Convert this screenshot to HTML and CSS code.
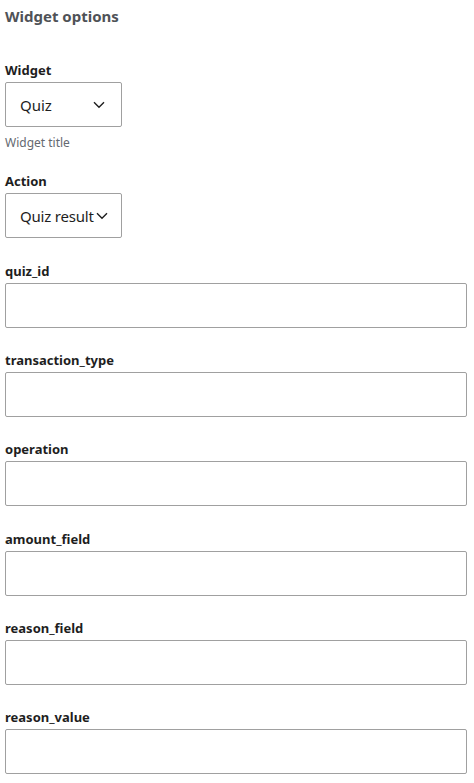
FILE: index.html
```html
<!DOCTYPE html>
<html>
<head>
<meta charset="utf-8">
<link rel="stylesheet" href="styles.css">
</head>
<body>
<div class="panel">
  <h2 class="title">Widget options</h2>
  <div class="field field-first">
    <label class="label">Widget</label>
    <div class="select"><span>Quiz</span><svg class="chev" viewBox="0 0 12 8" width="12" height="8"><path d="M1 1.2 L6 6.2 L11 1.2" fill="none" stroke="#1e1e1e" stroke-width="1.4"/></svg></div>
    <div class="help">Widget title</div>
  </div>
  <div class="field field-action">
    <label class="label">Action</label>
    <div class="select select-wide"><span>Quiz result</span><svg class="chev" viewBox="0 0 12 8" width="12" height="8"><path d="M1 1.2 L6 6.2 L11 1.2" fill="none" stroke="#1e1e1e" stroke-width="1.4"/></svg></div>
  </div>
  <div class="field field-q"><label class="label">quiz_id</label><div class="input"></div></div>
  <div class="field"><label class="label">transaction_type</label><div class="input"></div></div>
  <div class="field"><label class="label">operation</label><div class="input"></div></div>
  <div class="field field-q"><label class="label">amount_field</label><div class="input"></div></div>
  <div class="field"><label class="label">reason_field</label><div class="input"></div></div>
  <div class="field"><label class="label">reason_value</label><div class="input"></div></div>
</div>
</body>
</html>
```
FILE: styles.css
```css
html, body { margin: 0; padding: 0; background: #fff; }
body { font-family: "Noto Sans", "Open Sans", sans-serif; color: #1e1e1e; }
.panel { padding: 0 7px 0 5px; display: flex; flex-direction: column; }
.title { margin: 5px 0 0; font-size: 15px; font-weight: 700; color: #4f5257; line-height: 22px; }
.field { display: flex; flex-direction: column; margin-top: 23px; }
.field-first { margin-top: 34px; }
.field-action { margin-top: 21px; }
.field-q { margin-top: 24px; }
.label { font-size: 13px; font-weight: 700; line-height: 18px; margin-bottom: 3px; color: #1e1e1e; }
.select { width: 117px; height: 45px; box-sizing: border-box; border: 1px solid #a0a0a0; border-radius: 2px; display: flex; align-items: center; justify-content: space-between; padding: 0 16px 0 14px; font-size: 15px; color: #1e1e1e; }
.select-wide { padding: 0 13px 0 14px; letter-spacing: -0.2px; }
.help { font-size: 12px; color: #646970; margin-top: 7px; line-height: 17px; }
.input { height: 45px; box-sizing: border-box; border: 1px solid #a0a0a0; border-radius: 2px; background: #fff; }
```
